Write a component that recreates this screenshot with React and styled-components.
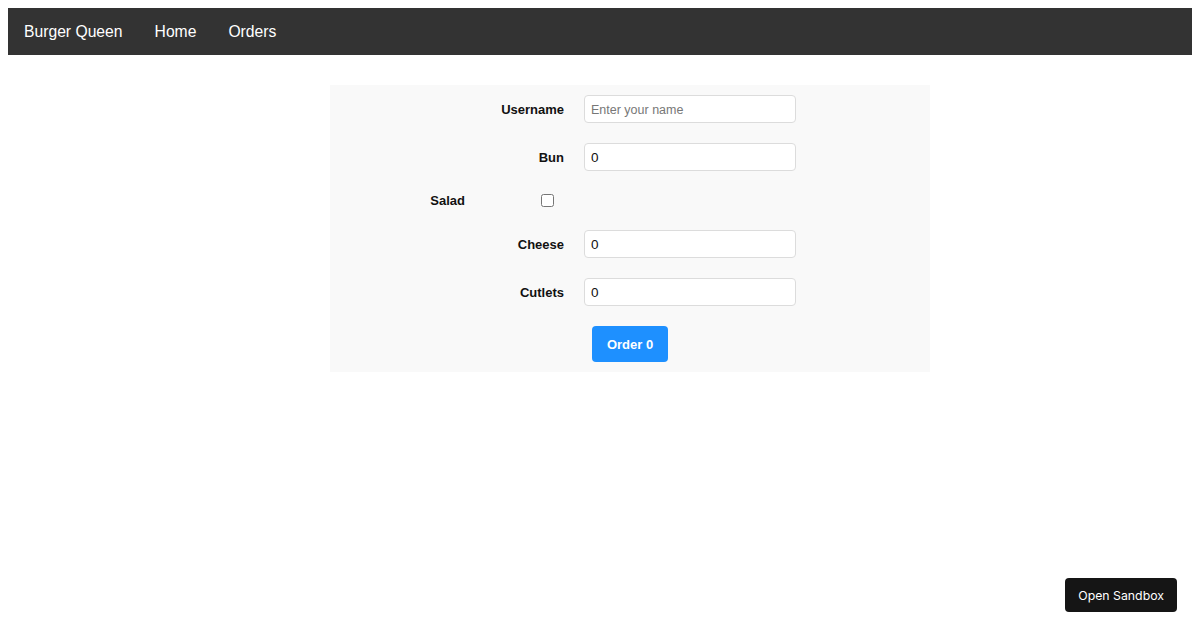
import React, { useState } from "react"
import styled, { createGlobalStyle } from "styled-components"

const GlobalStyle = createGlobalStyle`
  body {
    margin: 8px;
    background: #fff;
    font-family: "Liberation Sans", Arial, sans-serif;
    color: #111;
  }
`

const Nav = styled.nav`
  display: flex;
  align-items: center;
  height: 47px;
  background-color: #333;
`

const NavLink = styled.a`
  padding: 0 16px;
  color: #fff;
  font-size: 15.7px;
  text-decoration: none;
  cursor: pointer;
`

const Form = styled.form`
  width: 600px;
  margin: 30px 0 0 322px;
  padding: 10px 0;
  background-color: #f9f9f9;
  display: flex;
  flex-direction: column;
  gap: 20px;
`

const Row = styled.div`
  display: flex;
  align-items: center;
  justify-content: center;
  gap: 20px;
`

const CheckRow = styled.div`
  display: flex;
  align-items: center;
  padding-left: 35px;
  gap: 72px;
`

const Label = styled.label`
  width: 100px;
  text-align: right;
  font-size: 13px;
  font-weight: 700;
`

const Input = styled.input`
  box-sizing: border-box;
  width: 212px;
  height: 28px;
  padding: 0 6px;
  border: 1px solid #dcdcdc;
  border-radius: 4px;
  background: #fff;
  font-family: "Liberation Sans", Arial, sans-serif;
  font-size: 13.5px;
  color: #111;

  &::placeholder {
    color: #777;
    font-size: 12.5px;
  }
`

const Checkbox = styled.input`
  width: 13px;
  height: 13px;
  margin: 3px 3px 3px 4px;
`

const OrderButton = styled.button`
  align-self: center;
  height: 36px;
  padding: 0 15px;
  border: none;
  border-radius: 4px;
  background-color: #1e90ff;
  color: #fff;
  font-family: "Liberation Sans", Arial, sans-serif;
  font-size: 13px;
  font-weight: 700;
  cursor: pointer;
`

const SandboxButton = styled.a`
  position: fixed;
  right: 23px;
  bottom: 18px;
  display: flex;
  align-items: center;
  height: 34px;
  padding: 0 13px;
  border-radius: 4px;
  background-color: #151515;
  color: #fff;
  font-family: Inter, "Liberation Sans", sans-serif;
  font-size: 12.3px;
  text-decoration: none;
`

function NumberField({ label, value, onChange }) {
  return (
    <Row>
      <Label>{label}</Label>
      <Input
        type="number"
        value={value}
        onChange={(e) => onChange(Number(e.target.value) || 0)}
      />
    </Row>
  )
}

export default function App() {
  const [name, setName] = useState("")
  const [bun, setBun] = useState(0)
  const [salad, setSalad] = useState(false)
  const [cheese, setCheese] = useState(0)
  const [cutlets, setCutlets] = useState(0)

  return (
    <>
      <GlobalStyle />
      <Nav>
        <NavLink>Burger Queen</NavLink>
        <NavLink>Home</NavLink>
        <NavLink>Orders</NavLink>
      </Nav>
      <Form onSubmit={(e) => e.preventDefault()}>
        <Row>
          <Label>Username</Label>
          <Input
            placeholder="Enter your name"
            value={name}
            onChange={(e) => setName(e.target.value)}
          />
        </Row>
        <NumberField label="Bun" value={bun} onChange={setBun} />
        <CheckRow>
          <Label>Salad</Label>
          <Checkbox
            type="checkbox"
            checked={salad}
            onChange={(e) => setSalad(e.target.checked)}
          />
        </CheckRow>
        <NumberField label="Cheese" value={cheese} onChange={setCheese} />
        <NumberField label="Cutlets" value={cutlets} onChange={setCutlets} />
        <OrderButton type="submit">Order 0</OrderButton>
      </Form>
      <SandboxButton>Open Sandbox</SandboxButton>
    </>
  )
}
